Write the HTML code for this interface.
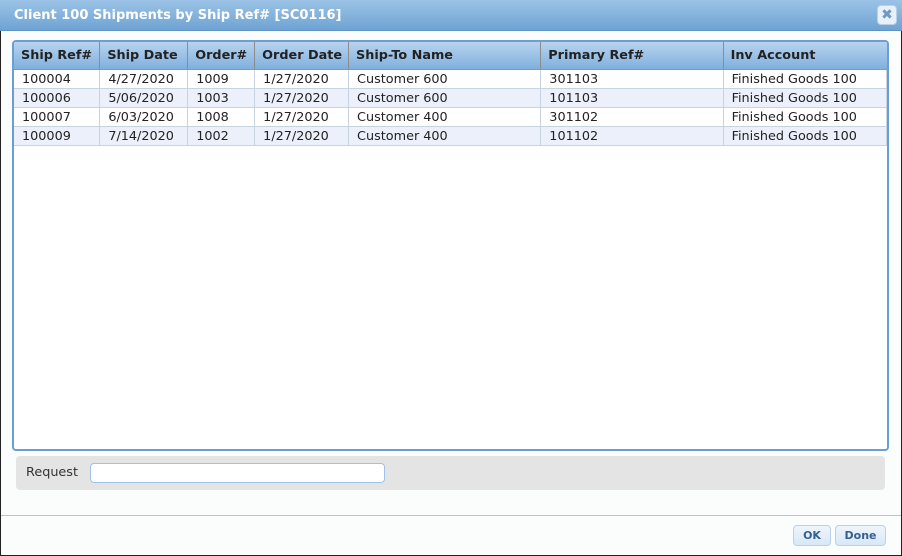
<!DOCTYPE html>
<html><head><style>
*{box-sizing:border-box;margin:0;padding:0}
body{width:902px;height:556px;overflow:hidden;font-family:"DejaVu Sans","Liberation Sans",sans-serif;background:#fff}
.win{position:absolute;left:0;top:0;width:902px;height:556px;border:1px solid #222;background:#fbfcfc}
.title{position:absolute;left:-1px;top:-1px;width:902px;height:31px;background:linear-gradient(#9cc3e6,#6fa3d3);border-bottom:1px solid #5f93c4}
.title span{position:absolute;left:14px;top:8px;color:#fff;font-weight:bold;font-size:13px}
.close{position:absolute;left:877px;top:5px;width:20px;height:20px;border-radius:4px;background:#e8f1fa;border:1px solid #b8d0e8;color:#6f98c4;font-weight:bold;font-size:14px;text-align:center;line-height:18px}
.grid{position:absolute;left:11px;top:39px;width:877px;height:411px;border:2px solid #6b9fd3;border-radius:4px;background:#fff;overflow:hidden}
table{border-collapse:collapse;font-size:12.8px;color:#222}
th{height:27px;padding-top:1px;background:linear-gradient(#b8d4ee,#80b0de);text-align:left;font-weight:bold;padding-left:7px;border-right:1px solid #8c8c8c;border-bottom:1px solid #6b9fd3;color:#222}
td{height:19px;padding-left:8px;padding-top:1px;border-right:1px solid #c8d3e0;border-bottom:1px solid #c8d3e0}
tr.alt td{background:#ebf0fb}
.req{position:absolute;left:15px;top:455px;width:869px;height:34px;background:#e4e4e4;border-radius:4px}
.req span{position:absolute;left:10px;top:9px;font-size:12.8px;color:#333}
.req .in{position:absolute;left:74px;top:7px;width:295px;height:20px;background:#fff;border:1px solid #9fc3e6;border-radius:4px}
.sep{position:absolute;left:0;top:514px;width:900px;height:1px;background:#a9c8e4}
.btn{position:absolute;top:524px;height:21px;border:1px solid #b9d2ea;border-radius:4px;background:linear-gradient(#eef5fc,#d8e8f7);color:#355f8f;font-weight:bold;font-size:11px;text-align:center;line-height:19px}
</style></head><body>
<div class="win">
<div class="title"><span>Client 100 Shipments by Ship Ref# [SC0116]</span><div class="close">✖</div></div>
<div class="grid">
<table>
<tr><th style="width:86px">Ship Ref#</th><th style="width:88px">Ship Date</th><th style="width:67px">Order#</th><th style="width:94px">Order Date</th><th style="width:193px">Ship-To Name</th><th style="width:183px">Primary Ref#</th><th style="width:164px;border-right:none">Inv Account</th></tr>
<tr><td>100004</td><td>4/27/2020</td><td>1009</td><td>1/27/2020</td><td>Customer 600</td><td>301103</td><td>Finished Goods 100</td></tr>
<tr class="alt"><td>100006</td><td>5/06/2020</td><td>1003</td><td>1/27/2020</td><td>Customer 600</td><td>101103</td><td>Finished Goods 100</td></tr>
<tr><td>100007</td><td>6/03/2020</td><td>1008</td><td>1/27/2020</td><td>Customer 400</td><td>301102</td><td>Finished Goods 100</td></tr>
<tr class="alt"><td>100009</td><td>7/14/2020</td><td>1002</td><td>1/27/2020</td><td>Customer 400</td><td>101102</td><td>Finished Goods 100</td></tr>
</table>
</div>
<div class="req"><span>Request</span><div class="in"></div></div>
<div class="sep"></div>
<div class="btn" style="left:792px;width:38px">OK</div>
<div class="btn" style="left:834px;width:51px">Done</div>
</div>
</body></html>
